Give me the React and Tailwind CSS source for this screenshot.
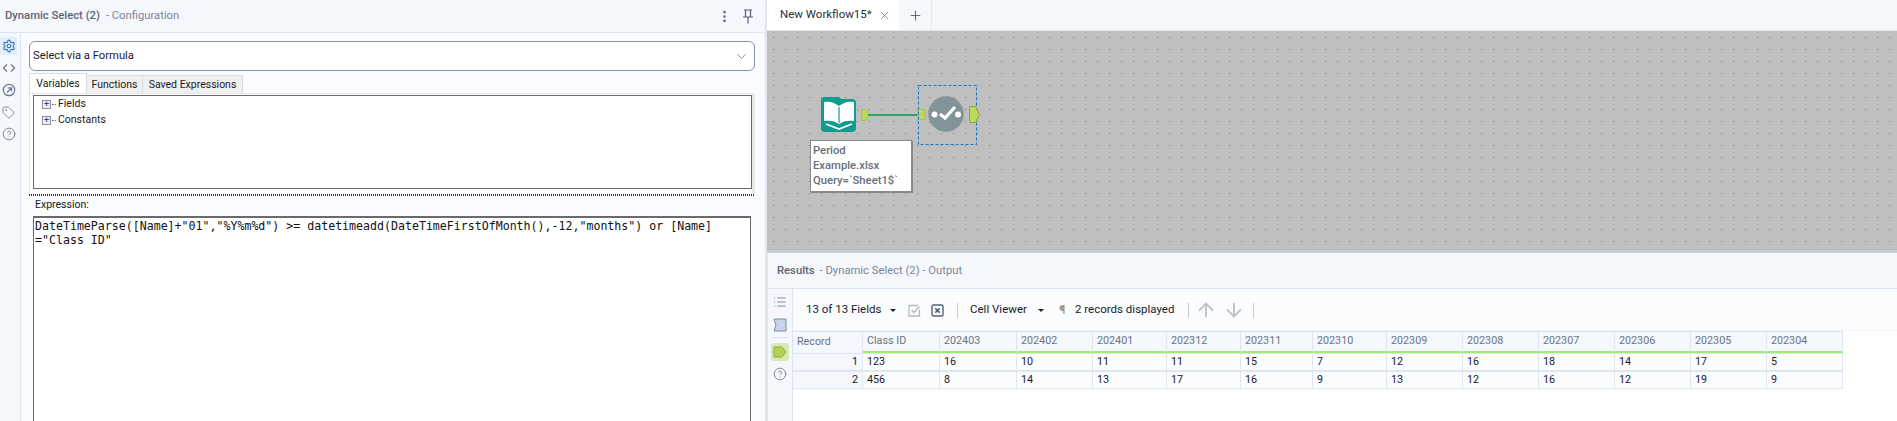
import React from "react";
import { Settings, Tag, CircleHelp, ChevronDown, EllipsisVertical, X, Plus, List, ArrowUp, ArrowDown } from "lucide-react";

const UI = "font-['Roboto','Noto_Sans',sans-serif]";

const columns = [
  ["Class ID", 77, "123", "456"],
  ["202403", 77, "16", "8"],
  ["202402", 76, "10", "14"],
  ["202401", 74, "11", "13"],
  ["202312", 74, "11", "17"],
  ["202311", 72, "15", "16"],
  ["202310", 74, "7", "9"],
  ["202309", 76, "12", "13"],
  ["202308", 76, "16", "12"],
  ["202307", 76, "18", "16"],
  ["202306", 76, "14", "12"],
  ["202305", 76, "17", "19"],
  ["202304", 76, "5", "9"],
];

function TreeRow({ label }) {
  return (
    <div className="flex items-center h-[16px]">
      <span className="w-[9px] h-[9px] border border-[#8a8f99] bg-[#eef0f4] text-[#27408b] flex items-center justify-center text-[9px] leading-none">+</span>
      <span className="w-[4px] ml-[1px] mr-[2px] border-t border-dotted border-[#777]" />
      <span className="text-[#1a1a1a]">{label}</span>
    </div>
  );
}

function ConfigPanel() {
  return (
    <div className="w-[767px] shrink-0 h-full flex flex-col bg-[#f9fbfe] border-r-[2px] border-[#dfe6f2]">
      <div className="h-[33px] shrink-0 bg-[#f4f7fc] border-b border-[#dbe4f2] flex items-center pl-[5px] pr-[11px] text-[11.25px]">
        <span className="font-medium text-[#5b6478]">Dynamic Select (2)</span>
        <span className="ml-[6px] text-[#7c8698]">- Configuration</span>
        <EllipsisVertical size={15} strokeWidth={2.2} className="ml-auto text-[#5f6b85]" />
        <svg width="12" height="15" viewBox="0 0 12 15" className="ml-[10px] text-[#56617d]" fill="none" stroke="currentColor" strokeWidth="1.2">
          <path d="M2 1 H10 M3.5 1 V7.5 M8.5 1 V7.5 M1 8 H11 M6 8 V14.5" />
        </svg>
      </div>
      <div className="flex-1 flex min-h-0">
        <div className="w-[21px] shrink-0 border-r border-[#dbe4f2] bg-[#f4f7fc] flex flex-col items-center pt-[4px] gap-[6px] pr-[3px]">
          <div className="w-[17px] h-[18px] bg-[#e2ecfa] rounded-[3px] flex items-center justify-center"><Settings size={14} strokeWidth={2} className="text-[#3b78b8]" /></div>
          <div className="h-[16px] -mt-[1px] flex items-center">
            <svg width="14" height="14" viewBox="0 0 14 14" fill="none" stroke="#6f7a90" strokeWidth="1.3"><path d="M5 3.5 L1.5 7 L5 10.5 M9 3.5 L12.5 7 L9 10.5" /></svg>
          </div>
          <div className="h-[16px] flex items-center">
            <svg width="14" height="14" viewBox="0 0 14 14" fill="none" stroke="#6f7a90" strokeWidth="1.2"><circle cx="7" cy="7" r="5.7" /><path d="M5 9.5 L9.5 5 M5.8 4.8 H9.5 V8.5" /></svg>
          </div>
          <div className="h-[16px] flex items-center"><Tag size={13} strokeWidth={1.5} className="text-[#6f7a90]" /></div>
          <div className="h-[16px] flex items-center"><CircleHelp size={14} strokeWidth={1.5} className="text-[#6f7a90]" /></div>
        </div>
        <div className="flex-1 min-w-0 pt-[8px] pl-[8px] pr-[10px] flex flex-col">
          <div className="h-[30px] shrink-0 border border-[#8096bb] rounded-[6px] bg-white flex items-center pl-[3px] pr-[5px] text-[11.25px] text-[#1a1a2e]">
            <span>Select via a Formula</span>
            <ChevronDown size={15} strokeWidth={1.6} className="ml-auto text-[#8091b4]" />
          </div>
          <div className="flex mt-[2px] h-[20px] shrink-0 items-end text-[10.5px] text-[#1a1a1a] whitespace-nowrap">
            <div className="h-[20px] w-[58px] bg-white border border-b-0 border-[#dcdcdc] flex items-center justify-center">Variables</div>
            <div className="h-[18px] w-[56px] bg-[#f0f0f0] border-r border-t border-[#dcdcdc] flex items-center justify-center">Functions</div>
            <div className="h-[18px] w-[100px] bg-[#f0f0f0] border-r border-t border-[#dcdcdc] flex items-center justify-center">Saved Expressions</div>
          </div>
          <div className="h-[100px] shrink-0 border-t border-r-[3px] border-l border-[#e6e6e6] bg-white pt-[1px] pl-[3px] pb-[2px]">
            <div className="h-[94px] border-[1.5px] border-[#6a6a6a] pl-[8px] text-[10.5px]">
              <TreeRow label="Fields" />
              <TreeRow label="Constants" />
            </div>
          </div>
          <div className="h-[2px] mt-[1px] shrink-0 bg-[repeating-linear-gradient(90deg,#333_0,#333_1px,#fff_1px,#fff_2px)]" />
          <div className="h-[20px] shrink-0 pl-[6px] pt-[1px] text-[10.5px] text-[#1a1a1a] leading-[16px]">Expression:</div>
          <div className="flex-1 min-h-0 ml-[4px] mr-[4px] border-t-[2px] border-x-[1.5px] border-[#6a6a6a] bg-white pt-[1px] pl-[1px] font-['DejaVu_Sans_Mono',monospace] text-[11.6px] leading-[14px] text-[#111]">
            <div className="whitespace-pre">{'DateTimeParse([Name]+"01","%Y%m%d") >= datetimeadd(DateTimeFirstOfMonth(),-12,"months") or [Name]'}</div>
            <div className="whitespace-pre">{'="Class ID"'}</div>
          </div>
        </div>
      </div>
    </div>
  );
}

function Canvas() {
  return (
    <div className="relative flex-1 min-h-0 bg-[#bfbfbf] bg-[radial-gradient(circle_at_6.5px_6.5px,#7a7a7a_0.7px,transparent_0.71px)] bg-[size:12px_12px]">
      <svg className="absolute left-[0px] top-[0px]" width="260" height="130" viewBox="0 0 260 130">
        <path d="M54 70 a4 4 0 0 1 4-4 h14 l2 2 h11 a4 4 0 0 1 4 4 v25 a4 4 0 0 1-4 4 h-27 a4 4 0 0 1-4-4z" fill="#0f9b8e" />
        <path d="M72 75 C67 71 62 70 57 71 V90 C63 89 68 90 72 93 C76 90 81 89 87 90 V71 C82 70 77 71 72 75Z" fill="#fff" />
        <path d="M72 76 V92" stroke="#0f9b8e" strokeWidth="1.2" />
        <path d="M59 93 L72 98 L85 93" fill="none" stroke="#fff" strokeWidth="1.8" />
        <path d="M94.5 78.5 h4 l3 3 v4 l-3 4 h-4z" fill="#bcd85a" stroke="#a8c24d" />
        <path d="M101 84 H155" stroke="#2ea25f" strokeWidth="2" />
        <rect x="151" y="78.5" width="7" height="10" fill="#bcd85a" stroke="#a8c24d" />
        <rect x="151.5" y="54.5" width="58" height="59" fill="none" stroke="#1677cc" strokeWidth="1" strokeDasharray="3 2" />
        <circle cx="179" cy="83" r="17.5" fill="#82949a" stroke="#82949a" strokeWidth="1" strokeDasharray="1.5 1.5" />
        <circle cx="167.5" cy="83.5" r="3" fill="#fff" />
        <circle cx="191" cy="83.5" r="3" fill="#fff" />
        <path d="M173 83 L178 87 L188 76" fill="none" stroke="#fff" strokeWidth="3.2" />
        <path d="M202.5 75.5 h6 l4 8 -4 8 h-6z" fill="#bcd85a" stroke="#8aa83e" />
      </svg>
      <div className={`absolute left-[43px] top-[109px] w-[102px] h-[52px] bg-white border border-[#8a8a8a] shadow-[1px_1px_0_#888] pl-[2px] pt-[2px] text-[11.25px] leading-[15px] font-medium text-[#66707a] ${UI}`}>
        <div>Period</div>
        <div>Example.xlsx</div>
        <div className="whitespace-nowrap">Query=`Sheet1$`</div>
      </div>
    </div>
  );
}

function Results() {
  return (
    <div className="h-[171px] shrink-0 flex flex-col bg-white border-l border-[#dfe6f2]">
      <div className="h-[3px] shrink-0 -ml-[1px] bg-[#c8ccd4]" />
      <div className="h-[36px] shrink-0 bg-[#f4f7fc] border-b border-[#dbe4f2] flex items-center pl-[9px] pt-[2px] text-[11.25px]">
        <span className="font-medium text-[#5b6478]">Results</span>
        <span className="ml-[5px] text-[#7c8698]">- Dynamic Select (2) - Output</span>
      </div>
      <div className="flex-1 flex min-h-0">
        <div className="w-[25px] shrink-0 border-r border-[#dbe4f2] bg-[#f4f7fc] flex flex-col items-center pt-[6px]">
          <List size={14} strokeWidth={1.5} className="text-[#6f7a90]" />
          <svg width="14" height="14" viewBox="0 0 14 14" className="mt-[9px]"><path d="M1 1 h12 v12 h-12 l2-6z" fill="#c9d4e6" stroke="#7d8ba6" /></svg>
          <div className="w-[17px] border-t border-[#dbe4f2] mt-[5px]" />
          <div className="mt-[5px] w-[18px] h-[18px] rounded-[3px] bg-[#d6e9b4] flex items-center justify-center">
            <svg width="14" height="12" viewBox="0 0 14 12"><path d="M1 1 h8 l4 5 -4 5 h-8z" fill="#b5d255" stroke="#8aa83e" /></svg>
          </div>
          <CircleHelp size={14} strokeWidth={1.5} className="text-[#6f7a90] mt-[6px]" />
        </div>
        <div className="flex-1 min-w-0 flex flex-col">
          <div className="h-[42px] shrink-0 bg-[#fbfcfe] border-b border-[#f0f2f6] flex items-center pl-[13px] pt-[1px] text-[11.5px] text-[#1a1a2e]">
            <span className="w-[75px] whitespace-nowrap">13 of 13 Fields</span>
            <span className="ml-[9px] w-0 h-0 border-x-[3px] border-x-transparent border-t-[3px] border-t-[#222]" />
            <svg width="13" height="13" viewBox="0 0 13 13" fill="none" strokeWidth="1.3" className="ml-[12px]"><path d="M11.5 5.5 V12 H1 V1.5 H10" stroke="#b4b8be" /><path d="M3.5 6 L6 8.5 L11.5 2.5" stroke="#b4b8be" /></svg>
            <svg width="13" height="13" viewBox="0 0 13 13" className="ml-[10px]" fill="none"><rect x="1" y="1" width="11" height="11" rx="1.5" stroke="#56617d" strokeWidth="1.4" /><path d="M4.3 4.3 L8.7 8.7 M8.7 4.3 L4.3 8.7" stroke="#56617d" strokeWidth="1.7" /></svg>
            <span className="ml-[13px] h-[15px] border-l border-[#c5c9d0]" />
            <span className="ml-[12px] w-[59px] whitespace-nowrap">Cell Viewer</span>
            <span className="ml-[9px] w-0 h-0 border-x-[3px] border-x-transparent border-t-[3px] border-t-[#222]" />
            <span className="ml-[15px] w-[5px] text-[13px] text-[#a09a90] font-semibold">¶</span>
            <span className="ml-[11px] w-[101px] whitespace-nowrap">2 records displayed</span>
            <span className="ml-[12px] h-[15px] border-l border-[#c5c9d0]" />
            <ArrowUp size={22} strokeWidth={2} className="ml-[6px] text-[#bcbfc4]" />
            <ArrowDown size={22} strokeWidth={2} className="ml-[6px] text-[#bcbfc4]" />
            <span className="ml-[8px] h-[15px] border-l border-[#c5c9d0]" />
          </div>
          <div className="w-[1050px] text-[10.75px] leading-none">
            <div className="flex h-[22px] bg-[#dfe6f2] pt-px">
              <div className="w-[69px] shrink-0 mr-px bg-[#f4f7fc] text-[#6b7486] pl-[4px] flex items-center">Record</div>
              {columns.map(([h, w]) => (
                <div key={h} style={{ width: w }} className="shrink-0 border-r border-[#dfe6f2] bg-[#f4f7fc] border-b-[2px] border-b-[#9ced75] text-[#6b7486] pl-[4px] flex items-center">{h}</div>
              ))}
            </div>
            {[1, 2].map((n) => (
              <div key={n} className="flex h-[18px] bg-[#dfe6f2] py-px text-[#1a1a2e]">
                <div className="w-[69px] shrink-0 mr-px bg-[#f4f7fc] pr-[4px] flex items-center justify-end">{n}</div>
                {columns.map((c) => (
                  <div key={c[0]} style={{ width: c[1] }} className="shrink-0 border-r border-[#dfe6f2] bg-[#fbfcfe] pl-[4px] flex items-center">{c[n + 1]}</div>
                ))}
              </div>
            ))}
          </div>
        </div>
      </div>
    </div>
  );
}

export default function App() {
  return (
    <div className={`w-[1897px] h-[421px] flex overflow-hidden bg-white ${UI}`}>
      <ConfigPanel />
      <div className="flex-1 min-w-0 flex flex-col">
        <div className="h-[31px] shrink-0 flex bg-[#f4f7fc] border-b border-[#e3e8f1]">
          <div className="w-[132px] bg-white flex items-center pl-[13px] text-[11.5px] text-[#2a2f3d] whitespace-nowrap">
            <span className="w-[93px]">New Workflow15*</span>
            <X size={13} strokeWidth={1.6} className="ml-[5px] text-[#7c8698]" />
          </div>
          <div className="w-[33px] border-r border-[#e3e8f1] flex items-center justify-center">
            <Plus size={15} strokeWidth={1.7} className="text-[#5f6b85]" />
          </div>
        </div>
        <Canvas />
        <Results />
      </div>
    </div>
  );
}
